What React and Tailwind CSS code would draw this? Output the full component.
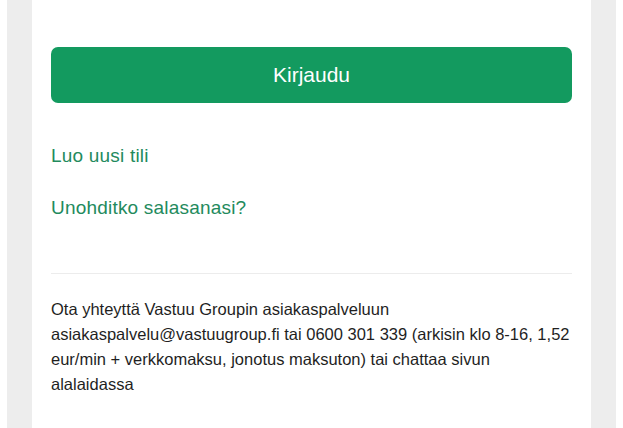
export default function App() {
  return (
    <div className="h-[428px] w-[623px] overflow-hidden bg-white px-[7px] font-['Liberation_Sans',Arial,sans-serif]">
      <div className="h-full bg-[#ededed] px-[25px]">
        <div className="h-full bg-white px-[19px] pt-[47px]">
          <button className="flex h-[56px] w-full items-center justify-center rounded-[7px] bg-[#139a5f] text-[21px] text-white">
            Kirjaudu
          </button>

          <div className="mt-[42px] flex flex-col gap-[30px] text-[19px] leading-[22px] tracking-[0.2px] text-[#238a5d]">
            <a href="#">Luo uusi tili</a>
            <a href="#">Unohditko salasanasi?</a>
          </div>

          <div className="mt-[54px] border-t border-[#ececec]" />

          <p className="mt-[23px] text-[16.5px] leading-[25px] text-[#1f1f1f]">
            Ota yhteyttä Vastuu Groupin asiakaspalveluun
            <br />
            asiakaspalvelu@vastuugroup.fi tai 0600 301 339 (arkisin klo 8-16, 1,52
            <br />
            eur/min + verkkomaksu, jonotus maksuton) tai chattaa sivun
            <br />
            alalaidassa
          </p>
        </div>
      </div>
    </div>
  );
}
